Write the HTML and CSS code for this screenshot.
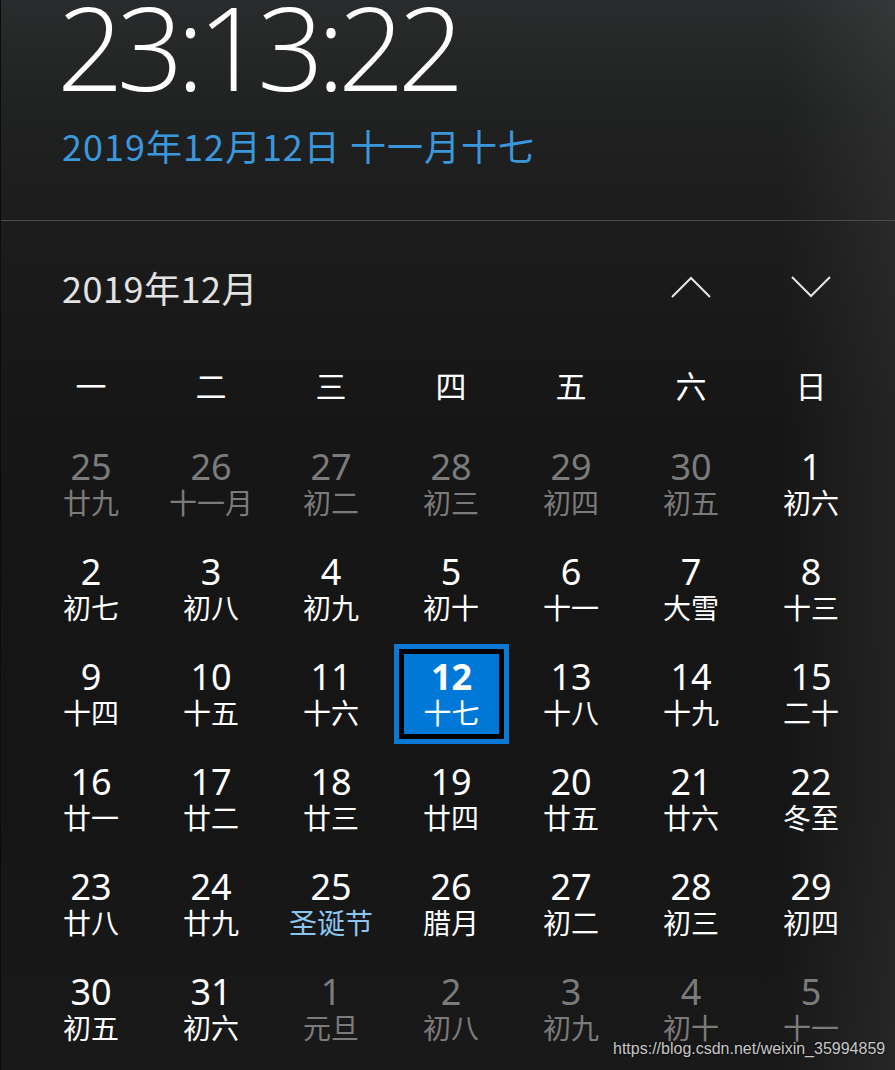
FILE: index.html
```html
<!DOCTYPE html>
<html lang="zh-CN">
<head>
<meta charset="utf-8">
<title>日历</title>
<link rel="stylesheet" href="styles.css">
</head>
<body>
<div class="panel">
  <header class="clock">
    <div class="time">23:13:22</div>
    <div class="date">2019年12月12日 十一月十七</div>
  </header>
  <div class="sep"></div>
  <section class="cal">
    <div class="cal-head">
      <div class="month">2019年12月</div>
      <div class="nav">
        <span class="nav-btn"><svg width="40" height="22" viewBox="0 0 40 22"><polyline points="1,21 20,2 39,21" fill="none" stroke="#e6e6e6" stroke-width="2"/></svg></span>
        <span class="nav-btn"><svg width="40" height="22" viewBox="0 0 40 22"><polyline points="1,1 20,20 39,1" fill="none" stroke="#e6e6e6" stroke-width="2"/></svg></span>
      </div>
    </div>
    <div class="weekdays">
      <span>一</span><span>二</span><span>三</span><span>四</span><span>五</span><span>六</span><span>日</span>
    </div>
    <div class="days">
      <div class="day other"><span class="n">25</span><span class="l">廿九</span></div>
      <div class="day other"><span class="n">26</span><span class="l">十一月</span></div>
      <div class="day other"><span class="n">27</span><span class="l">初二</span></div>
      <div class="day other"><span class="n">28</span><span class="l">初三</span></div>
      <div class="day other"><span class="n">29</span><span class="l">初四</span></div>
      <div class="day other"><span class="n">30</span><span class="l">初五</span></div>
      <div class="day"><span class="n">1</span><span class="l">初六</span></div>

      <div class="day"><span class="n">2</span><span class="l">初七</span></div>
      <div class="day"><span class="n">3</span><span class="l">初八</span></div>
      <div class="day"><span class="n">4</span><span class="l">初九</span></div>
      <div class="day"><span class="n">5</span><span class="l">初十</span></div>
      <div class="day"><span class="n">6</span><span class="l">十一</span></div>
      <div class="day"><span class="n">7</span><span class="l">大雪</span></div>
      <div class="day"><span class="n">8</span><span class="l">十三</span></div>

      <div class="day"><span class="n">9</span><span class="l">十四</span></div>
      <div class="day"><span class="n">10</span><span class="l">十五</span></div>
      <div class="day"><span class="n">11</span><span class="l">十六</span></div>
      <div class="day sel"><span class="n">12</span><span class="l">十七</span></div>
      <div class="day"><span class="n">13</span><span class="l">十八</span></div>
      <div class="day"><span class="n">14</span><span class="l">十九</span></div>
      <div class="day"><span class="n">15</span><span class="l">二十</span></div>

      <div class="day"><span class="n">16</span><span class="l">廿一</span></div>
      <div class="day"><span class="n">17</span><span class="l">廿二</span></div>
      <div class="day"><span class="n">18</span><span class="l">廿三</span></div>
      <div class="day"><span class="n">19</span><span class="l">廿四</span></div>
      <div class="day"><span class="n">20</span><span class="l">廿五</span></div>
      <div class="day"><span class="n">21</span><span class="l">廿六</span></div>
      <div class="day"><span class="n">22</span><span class="l">冬至</span></div>

      <div class="day"><span class="n">23</span><span class="l">廿八</span></div>
      <div class="day"><span class="n">24</span><span class="l">廿九</span></div>
      <div class="day"><span class="n">25</span><span class="l fest">圣诞节</span></div>
      <div class="day"><span class="n">26</span><span class="l">腊月</span></div>
      <div class="day"><span class="n">27</span><span class="l">初二</span></div>
      <div class="day"><span class="n">28</span><span class="l">初三</span></div>
      <div class="day"><span class="n">29</span><span class="l">初四</span></div>

      <div class="day"><span class="n">30</span><span class="l">初五</span></div>
      <div class="day"><span class="n">31</span><span class="l">初六</span></div>
      <div class="day other"><span class="n">1</span><span class="l">元旦</span></div>
      <div class="day other"><span class="n">2</span><span class="l">初八</span></div>
      <div class="day other"><span class="n">3</span><span class="l">初九</span></div>
      <div class="day other"><span class="n">4</span><span class="l">初十</span></div>
      <div class="day other"><span class="n">5</span><span class="l">十一</span></div>
    </div>
  </section>
  <div class="watermark">https://blog.csdn.net/weixin_35994859</div>
</div>
</body>
</html>
```
FILE: styles.css
```css
html, body {
  margin: 0;
  padding: 0;
  background: #161616;
}
.panel {
  position: relative;
  width: 895px;
  height: 1070px;
  overflow: hidden;
  box-sizing: border-box;
  border-left: 1px solid #0c0c0c;
  color: #ffffff;
  font-family: "Noto Sans", "Noto Sans CJK SC", sans-serif;
  background:
    linear-gradient(90deg, rgba(255,255,255,0) 0, rgba(255,255,255,0) 780px, rgba(255,255,255,0.06) 895px),
    linear-gradient(180deg, #2a2b2c 0, #202121 110px, #1c1c1c 220px, #161616 420px, #151515 800px, #191919 1070px);
}
.clock {
  padding-left: 56px;
  height: 220px;
  box-sizing: border-box;
}
.time {
  font-family: "Open Sans", "Lato", sans-serif;
  font-weight: 300;
  font-size: 117px;
  line-height: 92px;
  letter-spacing: -7px;
  color: #ffffff;
}
.date {
  margin-top: 29px;
  padding-left: 5px;
  font-family: "Noto Sans CJK SC", sans-serif;
  font-size: 36px;
  line-height: 48px;
  letter-spacing: 1px;
  color: #3b97dc;
}
.sep {
  height: 1px;
  background: #4b4b4b;
}
.cal {
  padding: 0 24px 0 30px;
}
.cal-head {
  margin-top: 42px;
  display: flex;
  justify-content: space-between;
  align-items: center;
  height: 48px;
}
.month {
  padding-left: 31px;
  font-family: "Noto Sans CJK SC", sans-serif;
  font-size: 36px;
  line-height: 48px;
  letter-spacing: 0.5px;
  color: #e3e3e3;
}
.nav {
  display: flex;
}
.nav-btn {
  width: 120px;
  height: 48px;
  display: flex;
  align-items: center;
  justify-content: center;
}
.nav-btn svg {
  display: block;
}
.weekdays {
  margin-top: 44px;
  display: grid;
  grid-template-columns: repeat(7, 120px);
  height: 60px;
  align-items: center;
  justify-items: center;
  font-family: "Noto Sans CJK SC", sans-serif;
  font-size: 31px;
  line-height: 60px;
  color: #ffffff;
}
.days {
  margin-top: 17px;
  display: grid;
  grid-template-columns: repeat(7, 120px);
  grid-auto-rows: 105px;
}
.day {
  display: flex;
  flex-direction: column;
  align-items: center;
  padding-top: 17px;
  box-sizing: border-box;
  color: #ffffff;
}
.day .n {
  font-family: "Noto Sans", sans-serif;
  font-size: 36px;
  line-height: 36px;
}
.day .l {
  margin-top: 3px;
  font-family: "Noto Sans CJK SC", sans-serif;
  font-size: 28px;
  line-height: 28px;
}
.day.other {
  color: #7b7b7b;
}
.day .l.fest {
  color: #8cc6ef;
}
.day.sel {
  margin: 2px 2px 3px 3px;
  padding-top: 10px;
  border: 5px solid #0a79d5;
  box-shadow: inset 0 0 0 5px #000000;
  background: #0078d7;
}
.day.sel .n {
  font-weight: 700;
}
.watermark {
  position: absolute;
  left: 612px;
  top: 1041px;
  font-family: "Liberation Sans", Arial, sans-serif;
  font-size: 16px;
  line-height: 16px;
  color: rgba(235,235,235,0.85);
  text-shadow: 0 0 2px #000;
  white-space: nowrap;
}
```
